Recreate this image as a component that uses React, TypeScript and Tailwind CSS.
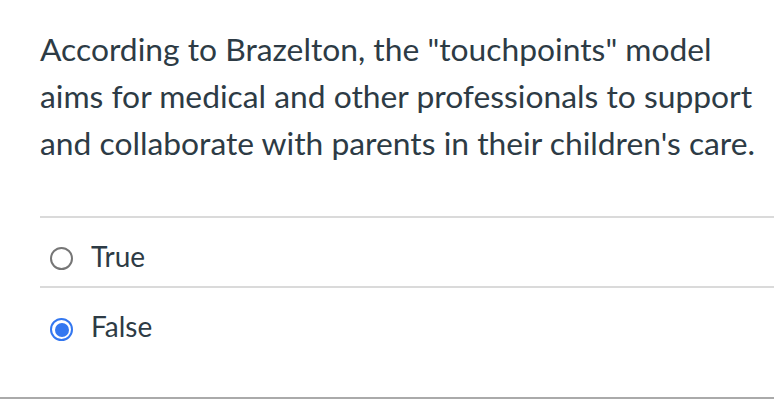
export default function App() {
  return (
    <div className="w-[774px] h-[412px] bg-white overflow-hidden" style={{ fontFamily: 'Lato, "Open Sans", sans-serif' }}>
      <div className="pl-[40px] pt-[26px]">
        <p className="text-[31.8px] leading-[47px] text-[#2d3b45] whitespace-nowrap">
          According to Brazelton, the "touchpoints" model
          <br />
          aims for medical and other professionals to support
          <br />
          and collaborate with parents in their children's care.
        </p>
        <div className="mt-[49px] h-[2px] bg-[#dadada]" />
        <div className="h-[68px] flex items-start pl-[10px] gap-[18px]">
          <div className="mt-[29px] w-[23px] h-[23px] rounded-full border-2 border-[#767676]" />
          <span className="mt-[21px] text-[28px] leading-[34px] text-[#2d3b45]">True</span>
        </div>
        <div className="h-[2px] bg-[#dadada]" />
        <div className="h-[68px] flex items-start pl-[10px] gap-[18px]">
          <div className="mt-[30px] w-[23px] h-[23px] rounded-full border-[2.5px] border-[#3377f0] flex items-center justify-center">
            <div className="w-[14px] h-[14px] rounded-full bg-[#3377f0]" />
          </div>
          <span className="mt-[21px] text-[28px] leading-[34px] text-[#2d3b45]">False</span>
        </div>
      </div>
      <div className="mt-[41px] h-[2px] bg-[#aaaaaa]" />
    </div>
  );
}
